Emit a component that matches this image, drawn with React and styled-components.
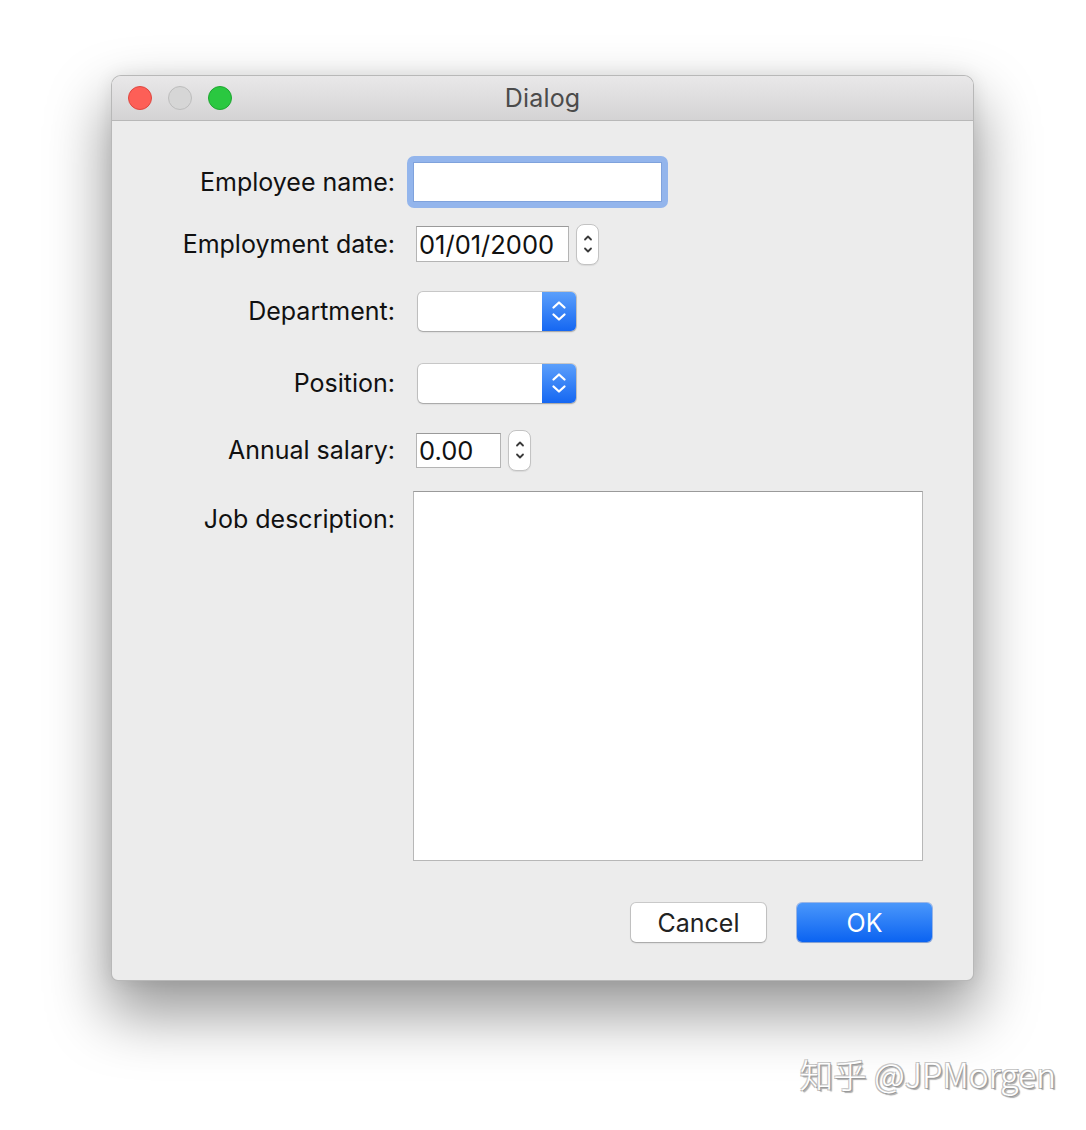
import React from "react";
import styled, { createGlobalStyle } from "styled-components";

const Global = createGlobalStyle`
  html, body { margin: 0; padding: 0; background: #ffffff; }
  body { font-family: Inter, "Liberation Sans", sans-serif; }
`;

const Page = styled.div`
  width: 1086px;
  height: 1130px;
  box-sizing: border-box;
  padding: 75px 0 0 111px;
  background: #ffffff;
  overflow: hidden;
`;

const Window = styled.div`
  width: 863px;
  height: 906px;
  box-sizing: border-box;
  border-radius: 10px 10px 7px 7px;
  border: 1px solid rgba(0, 0, 0, 0.22);
  background: #ececec;
  box-shadow: 0 30px 60px 4px rgba(0, 0, 0, 0.4), 0 0 18px rgba(0, 0, 0, 0.08);
  display: flex;
  flex-direction: column;
  overflow: hidden;
`;

const TitleBar = styled.div`
  height: 44px;
  flex: none;
  display: grid;
  grid-template-columns: 1fr auto 1fr;
  align-items: center;
  background: linear-gradient(#e9e8e9, #d4d3d4);
  border-bottom: 1px solid #b8b8b8;
  padding: 0 16px;
`;

const Lights = styled.div`
  display: flex;
  gap: 16px;
`;

const Light = styled.span`
  width: 24px;
  height: 24px;
  border-radius: 50%;
  box-sizing: border-box;
  background: ${(p) => p.$bg};
  border: 1px solid ${(p) => p.$bd};
`;

const Title = styled.div`
  font-size: 25px;
  color: #4b4b4b;
  letter-spacing: 0.2px;
`;

const Body = styled.div`
  flex: none;
  display: grid;
  grid-template-columns: 283px 1fr;
  grid-template-rows: 62px 62px 72px 72px 62px 380px;
  padding: 30px 0 0 0;
  align-content: start;
`;

const Label = styled.div`
  font-size: 25px;
  line-height: 30px;
  color: #111;
  text-align: right;
  align-self: ${(p) => (p.$top ? "start" : "center")};
  padding-top: ${(p) => (p.$top ? "23px" : "0")};
  white-space: nowrap;
`;

const Field = styled.div`
  display: flex;
  align-items: ${(p) => (p.$top ? "flex-start" : "center")};
  gap: 7px;
  padding-left: ${(p) => p.$indent}px;
  padding-top: ${(p) => p.$pt || 0}px;
`;

const FocusRing = styled.div`
  width: 261px;
  height: 52px;
  box-sizing: border-box;
  padding: 6px;
  border-radius: 7px;
  background: #93b5ec;
`;

const FocusInner = styled.div`
  width: 100%;
  height: 100%;
  box-sizing: border-box;
  background: #fff;
  border: 1px solid #7fa2dc;
`;

const TextBox = styled.div`
  width: ${(p) => p.$w}px;
  height: ${(p) => p.$h}px;
  box-sizing: border-box;
  background: #fff;
  border: 1px solid #b4b4b4;
  border-top-color: #9a9a9a;
  font-size: 25.5px;
  color: #111;
  display: flex;
  align-items: center;
  padding-left: 2px;
`;

const Spinner = styled.div`
  width: 23px;
  height: 41px;
  box-sizing: border-box;
  background: #fff;
  border: 1px solid #c3c3c3;
  border-radius: 8px;
  box-shadow: 0 1px 1px rgba(0, 0, 0, 0.08);
  display: flex;
  align-items: center;
  justify-content: center;
`;

const Combo = styled.div`
  width: 158px;
  height: 39px;
  box-sizing: border-box;
  border-radius: 5px;
  background: #fff;
  box-shadow: 0 0 0 1px rgba(0, 0, 0, 0.15), 0 1px 2px rgba(0, 0, 0, 0.2);
  display: flex;
  justify-content: flex-end;
  overflow: hidden;
`;

const ComboArrow = styled.div`
  width: 34px;
  height: 100%;
  background: linear-gradient(#5b9ffb, #1567f2);
  display: flex;
  align-items: center;
  justify-content: center;
`;

const TextArea = styled.div`
  width: 510px;
  height: 370px;
  box-sizing: border-box;
  background: #fff;
  border: 1px solid #b7b7b7;
  border-top-color: #9a9a9a;
`;

const Footer = styled.div`
  display: flex;
  justify-content: flex-end;
  gap: 31px;
  padding: 42px 41px 0 0;
`;

const Button = styled.div`
  width: 135px;
  height: 39px;
  box-sizing: border-box;
  border-radius: 5px;
  display: flex;
  align-items: center;
  justify-content: center;
  font-size: 25px;
  color: ${(p) => (p.$primary ? "#fff" : "#222")};
  background: ${(p) => (p.$primary ? "linear-gradient(#4a97fb, #0b63f1)" : "#fff")};
  box-shadow: ${(p) =>
    p.$primary
      ? "0 0 0 1px rgba(0, 80, 220, 0.35), 0 1px 1px rgba(0,0,0,0.15)"
      : "0 0 0 1px rgba(0, 0, 0, 0.14), 0 1px 2px rgba(0, 0, 0, 0.2)"};
`;

const Watermark = styled.div`
  text-align: right;
  padding: 68px 30px 0 0;
  margin-left: -111px;
  font-family: "Noto Sans CJK SC", Inter, sans-serif;
  font-weight: 300;
  font-size: 33.5px;
  color: #fff;
  text-shadow: 1px 1px 0 #9a9a9a, -1px -1px 0 #c8c8c8, 1px -1px 0 #bbb, -1px 1px 0 #bbb, 2px 2px 1px #aaa;
`;

const Chevrons = () => (
  <svg width="12" height="28" viewBox="0 0 12 28" fill="none">
    <path d="M3 9.5 L6 6.5 L9 9.5" stroke="#3a3a3a" strokeWidth="1.8" strokeLinecap="round" strokeLinejoin="round" />
    <path d="M3 18.5 L6 21.5 L9 18.5" stroke="#3a3a3a" strokeWidth="1.8" strokeLinecap="round" strokeLinejoin="round" />
  </svg>
);

const ComboChevrons = () => (
  <svg width="18" height="28" viewBox="0 0 18 28" fill="none">
    <path d="M3.5 10.5 L9 5.5 L14.5 10.5" stroke="#fff" strokeWidth="2.3" strokeLinecap="round" strokeLinejoin="round" />
    <path d="M3.5 17.5 L9 22.5 L14.5 17.5" stroke="#fff" strokeWidth="2.3" strokeLinecap="round" strokeLinejoin="round" />
  </svg>
);

export default function App() {
  return (
    <>
      <Global />
      <Page>
        <Window>
          <TitleBar>
            <Lights>
              <Light $bg="#fd5f57" $bd="#de4740" />
              <Light $bg="#d6d6d6" $bd="#bdbdbd" />
              <Light $bg="#2ac840" $bd="#1fa631" />
            </Lights>
            <Title>Dialog</Title>
            <div />
          </TitleBar>
          <Body>
            <Label>Employee name:</Label>
            <Field $indent={12}>
              <FocusRing>
                <FocusInner />
              </FocusRing>
            </Field>

            <Label>Employment date:</Label>
            <Field $indent={21}>
              <TextBox $w={153} $h={36}>01/01/2000</TextBox>
              <Spinner>
                <Chevrons />
              </Spinner>
            </Field>

            <Label>Department:</Label>
            <Field $indent={23}>
              <Combo>
                <ComboArrow>
                  <ComboChevrons />
                </ComboArrow>
              </Combo>
            </Field>

            <Label>Position:</Label>
            <Field $indent={23}>
              <Combo>
                <ComboArrow>
                  <ComboChevrons />
                </ComboArrow>
              </Combo>
            </Field>

            <Label>Annual salary:</Label>
            <Field $indent={21}>
              <TextBox $w={85} $h={35}>0.00</TextBox>
              <Spinner>
                <Chevrons />
              </Spinner>
            </Field>

            <Label $top>Job description:</Label>
            <Field $indent={18} $pt={10} $top>
              <TextArea />
            </Field>
          </Body>
          <Footer>
            <Button>Cancel</Button>
            <Button $primary>OK</Button>
          </Footer>
        </Window>
        <Watermark>知乎 @JPMorgen</Watermark>
      </Page>
    </>
  );
}
